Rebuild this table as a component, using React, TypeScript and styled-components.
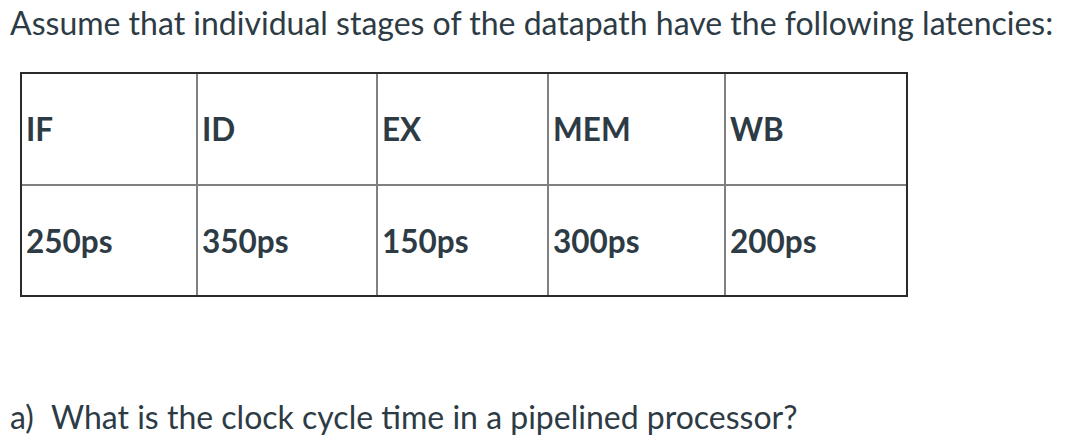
import styled, { createGlobalStyle } from "styled-components";

const GlobalStyle = createGlobalStyle`
  body {
    margin: 0;
    background: #ffffff;
    font-family: Lato, "Open Sans", sans-serif;
    color: #2d3b45;
  }
`;

const Page = styled.div`
  padding: 3px 10px 0 10px;
`;

const Intro = styled.p`
  margin: 0;
  font-size: 32px;
  line-height: 40px;
  white-space: nowrap;
`;

const LatencyTable = styled.table`
  margin: 29px 0 0 10px;
  width: 888px;
  table-layout: fixed;
  border-collapse: separate;
  border-spacing: 0;
  border: 2px solid #2b2b2b;
`;

const Row = styled.tr<{ $height: number }>`
  height: ${(p) => p.$height}px;

  &:last-child td {
    border-bottom: none;
  }
`;

const Cell = styled.td`
  padding: 0 0 0 4px;
  border-right: 2px solid #808080;
  border-bottom: 2px solid #808080;
  font-size: 31.5px;
  font-weight: 700;
  line-height: 38px;
  vertical-align: middle;

  &:last-child {
    border-right: none;
  }
`;

const Question = styled.div`
  display: flex;
  margin-top: 100px;
  font-size: 32px;
  line-height: 40px;
  white-space: nowrap;
`;

const Marker = styled.span`
  width: 41px;
  flex: none;
`;

const stages = ["IF", "ID", "EX", "MEM", "WB"];
const latencies = ["250ps", "350ps", "150ps", "300ps", "200ps"];
const colWidths = [176, 180, 171, 177, 180];

export default function App() {
  return (
    <>
      <GlobalStyle />
      <Page>
        <Intro>
          Assume that individual stages of the datapath have the following
          latencies:
        </Intro>
        <LatencyTable>
          <colgroup>
            {colWidths.map((w, i) => (
              <col key={i} style={{ width: w }} />
            ))}
          </colgroup>
          <tbody>
            <Row $height={112}>
              {stages.map((s) => (
                <Cell key={s}>{s}</Cell>
              ))}
            </Row>
            <Row $height={109}>
              {latencies.map((l) => (
                <Cell key={l}>{l}</Cell>
              ))}
            </Row>
          </tbody>
        </LatencyTable>
        <Question>
          <Marker>a)</Marker>
          <span>What is the clock cycle time in a pipelined processor?</span>
        </Question>
      </Page>
    </>
  );
}
